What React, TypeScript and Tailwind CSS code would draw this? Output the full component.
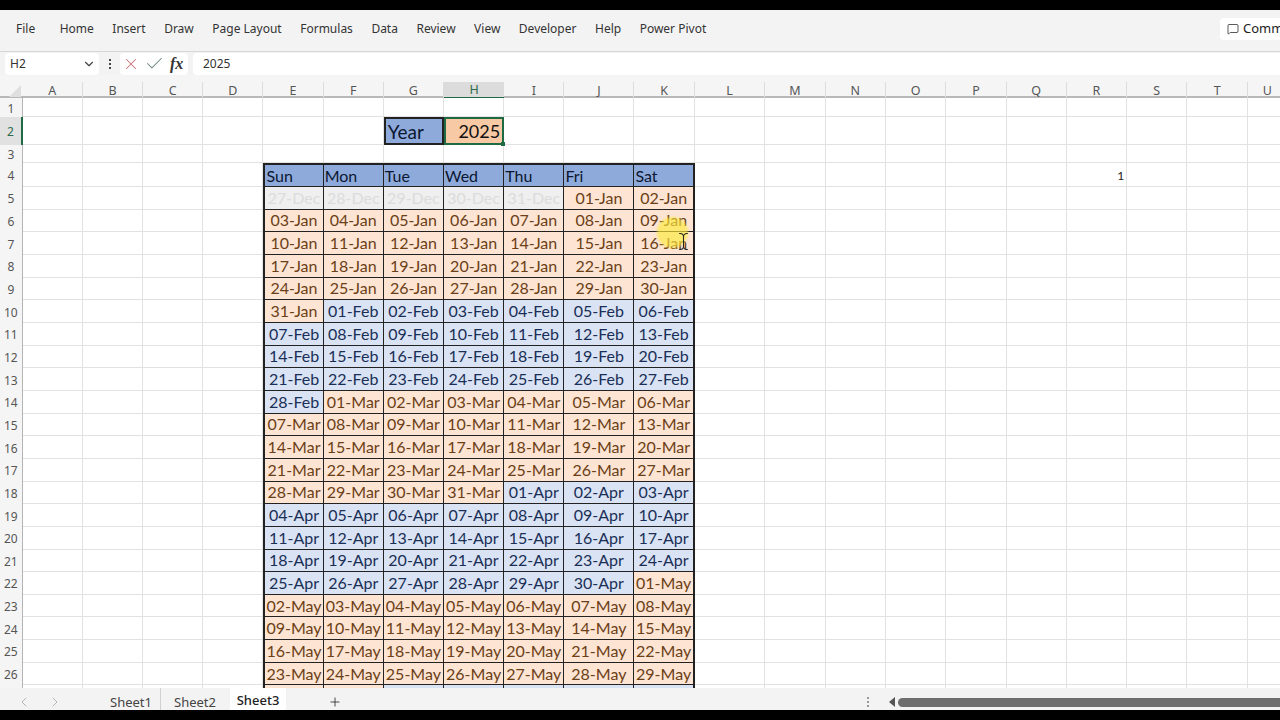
import { Check, ChevronDown, ChevronLeft, ChevronRight, MessageSquare, Plus, TextCursor, X } from "lucide-react";

const gridCols =
  "grid grid-cols-[22.7px_repeat(9,60.2px)_70px_60.5px_70.5px_repeat(8,60.3px)_40px]";
const columns = ["A", "B", "C", "D", "E", "F", "G", "H", "I", "J", "K", "L", "M", "N", "O", "P", "Q", "R", "S", "T", "U"];
const tabs = ["Home", "Insert", "Draw", "Page Layout", "Formulas", "Data", "Review", "View", "Developer", "Help", "Power Pivot"];
const weekdays = ["Sun", "Mon", "Tue", "Wed", "Thu", "Fri", "Sat"];
const months = ["Jan", "Feb", "Mar", "Apr", "May", "Jun"];

// first visible Sunday of the calendar
const START = Date.UTC(2020, 11, 27);
const DAY = 86400000;

function dateCell(row: number, col: number) {
  const d = new Date(START + ((row - 5) * 7 + col) * DAY);
  const day = String(d.getUTCDate()).padStart(2, "0");
  if (d.getUTCFullYear() === 2020) return { text: `${day}-Dec`, tone: "bg-[#efefef] text-[#dcdcdc]" };
  const m = d.getUTCMonth();
  return {
    text: `${day}-${months[m]}`,
    tone: m % 2 === 0 ? "bg-[#fde4d3] text-[#6b3f17]" : "bg-[#d9e3f3] text-[#1a2f57]",
  };
}

function rowHeight(row: number) {
  if (row === 1) return "h-[19px]";
  if (row === 2) return "h-[28px]";
  if (row === 3) return "h-[18px]";
  if (row === 4) return "h-[24px]";
  return "h-[22.67px]";
}

function TableCell({ row, col }: { row: number; col: number }) {
  const edge = `${col === 0 ? "border-l-2 border-l-[#222]" : ""} ${col === 6 ? "border-r-2 border-r-[#222]" : "border-r border-r-[#222]"}`;
  if (row === 4) {
    return (
      <div className={`flex items-center border-t-2 border-t-[#222] border-b border-b-[#222] bg-[#8eaadb] pl-[1px] font-[Lato,sans-serif] text-[16px] leading-none text-[#0b1730] ${edge}`}>
        {weekdays[col]}
      </div>
    );
  }
  const cell = dateCell(row, col);
  return (
    <div className={`flex items-center justify-center whitespace-nowrap border-b border-b-[#222] font-[Lato,sans-serif] text-[16px] leading-none ${cell.tone} ${edge}`}>
      {cell.text}
    </div>
  );
}

function PlainCell({ row, col }: { row: number; col: number }) {
  return (
    <div className="flex items-center justify-end border-r border-b border-[#e2e2e2] bg-white pt-[3px] pr-[2px] font-[Lato,sans-serif] text-[12px] leading-none text-[#222]">
      {row === 4 && col === 17 ? "1" : ""}
    </div>
  );
}

function SheetRow({ row }: { row: number }) {
  return (
    <div className={`${gridCols} ${rowHeight(row)}`}>
      <div
        className={`flex items-center justify-center pt-[2px] font-[Noto_Sans,sans-serif] text-[12px] leading-none ${
          row === 2 ? "border-r-2 border-r-[#1e6b43] bg-[#e1e1e1] text-[#2f6b4c]" : "border-r border-r-[#b5b5b5] bg-[#f5f5f5] text-[#555]"
        }`}
      >
        {row}
      </div>
      {columns.map((_, col) => {
        if (row === 2 && col === 6) {
          return (
            <div key={col} className="flex items-center border-2 border-[#222] bg-[#8eaadb] pl-[2px] font-[Lato,sans-serif] text-[19px] leading-none text-[#0b1730]">
              Year
            </div>
          );
        }
        if (row === 2 && col === 7) {
          return (
            <div key={col} className="relative flex items-center justify-end border-2 border-[#1e6b43] bg-[#f7c9a4] pr-[2px] font-[Lato,sans-serif] text-[18px] leading-none text-[#111]">
              2025
              <span className="absolute -right-[3px] -bottom-[3px] h-[4px] w-[4px] bg-[#1e6b43]" />
            </div>
          );
        }
        if (row >= 4 && col >= 4 && col <= 10) return <TableCell key={col} row={row} col={col - 4} />;
        return <PlainCell key={col} row={row} col={col} />;
      })}
    </div>
  );
}

export default function App() {
  const rows = Array.from({ length: 27 }, (_, i) => i + 1);

  return (
    <div className="flex h-[720px] w-[1280px] flex-col overflow-hidden bg-black py-[10px] font-[Noto_Sans,sans-serif]">
      {/* ribbon tabs */}
      <div className="flex h-[42px] shrink-0 items-center justify-between border-b border-[#d6d6d6] bg-[#f3f3f3] pb-[3px]">
        <div className="flex items-center gap-[18.5px] pl-[16px] text-[12px] text-[#333]">
          <span className="mr-[6px]">File</span>
          {tabs.map((t) => (
            <span key={t}>{t}</span>
          ))}
        </div>
        <div className="flex h-[22px] w-[60px] shrink-0 items-center gap-[4px] overflow-hidden rounded-l-[4px] bg-white pl-[7px] text-[13px] text-[#222]">
          <MessageSquare className="h-[12px] w-[12px] shrink-0" strokeWidth={1.5} />
          <span>Comments</span>
        </div>
      </div>

      {/* formula bar */}
      <div className="flex h-[23px] shrink-0 items-center bg-[#f3f3f3] pl-[5px] text-[12px] text-[#333]">
        <div className="flex h-[22px] w-[94px] items-center justify-between rounded-[4px] bg-white pr-[3px] pl-[5px]">
          H2
          <ChevronDown className="h-[14px] w-[14px] text-[#444]" />
        </div>
        <div className="flex w-[21px] flex-col items-center gap-[2px]">
          <span className="h-[2px] w-[2px] bg-[#444]" />
          <span className="h-[2px] w-[2px] bg-[#444]" />
          <span className="h-[2px] w-[2px] bg-[#444]" />
        </div>
        <div className="flex h-[22px] w-[68px] items-center gap-[3.5px] rounded-[4px] bg-white pl-[2px]">
          <X className="h-[18px] w-[18px] text-[#c9747c]" strokeWidth={1.4} />
          <Check className="h-[21px] w-[21px] text-[#6f8d7c]" strokeWidth={1.2} />
          <span className="pl-[2px] font-[Liberation_Serif,serif] text-[16px] font-bold text-[#333] italic">fx</span>
        </div>
        <div className="ml-[5px] flex h-[22px] flex-1 items-center rounded-l-[4px] bg-white pl-[10px]">2025</div>
      </div>

      {/* column headers */}
      <div className={`${gridCols} h-[23px] shrink-0 border-b-2 border-[#b8b8b8] bg-[#f5f5f5] pt-[7px] text-[12.5px] leading-none text-[#555]`}>
        <div className="relative">
          <span className="absolute right-[2px] bottom-[2px] h-0 w-0 border-b-[12px] border-l-[12px] border-b-[#dfdfdf] border-l-transparent" />
        </div>
        {columns.map((c) => (
          <div
            key={c}
            className={`flex items-center justify-center pt-[2px] ${
              c === "H" ? "border-b-2 border-[#1e6b43] bg-[#dcdcdc] text-[#2f6b4c]" : "border-r border-[#dcdcdc]"
            }`}
          >
            {c}
          </div>
        ))}
      </div>

      {/* sheet */}
      <div className="relative min-h-0 flex-1 overflow-hidden">
        {rows.map((r) => (
          <SheetRow key={r} row={r} />
        ))}
        <span className="absolute top-[119px] left-[657px] h-[31px] w-[31px] rounded-full bg-[#fde93a]/65 blur-[1px]" />
        <TextCursor className="absolute top-[134px] left-[674px] h-[19px] w-[19px] text-[#222]" strokeWidth={1.3} />
      </div>

      {/* sheet tabs and scroll bar */}
      <div className="flex h-[22px] shrink-0 items-center bg-[#f3f3f3] text-[13px] leading-none text-[#444]">
        <div className="mt-[6px] flex w-[110px] shrink-0 gap-[15px] pl-[16px] text-[#aaa]">
          <ChevronLeft className="h-[16px] w-[16px]" strokeWidth={1.25} />
          <ChevronRight className="h-[16px] w-[16px]" strokeWidth={1.25} />
        </div>
        <span className="h-full w-[51px] shrink-0 border-r border-[#d0d0d0] pt-[8px]">Sheet1</span>
        <span className="h-full w-[69px] shrink-0 pt-[8px] pl-[13px]">Sheet2</span>
        <span className="flex h-full w-[56px] shrink-0 justify-center bg-white pt-[6px] text-[13px] font-medium text-[#222]">Sheet3</span>
        <div className="flex h-full w-[96px] shrink-0 items-center pl-[42px]">
          <Plus className="mt-[6px] h-[14px] w-[14px] text-[#333]" strokeWidth={1.5} />
        </div>
        <div className="mt-[6px] flex flex-1 items-center pl-[485px]">
          <div className="flex flex-col gap-[2px]">
            <span className="h-[2px] w-[2px] bg-[#999]" />
            <span className="h-[2px] w-[2px] bg-[#999]" />
            <span className="h-[2px] w-[2px] bg-[#999]" />
          </div>
          <span className="ml-[20px] h-0 w-0 border-y-[5px] border-r-[6px] border-y-transparent border-r-[#555]" />
          <div className="ml-[3px] h-[9px] flex-1 rounded-l-full bg-[#6e6e6e]" />
        </div>
      </div>
    </div>
  );
}
